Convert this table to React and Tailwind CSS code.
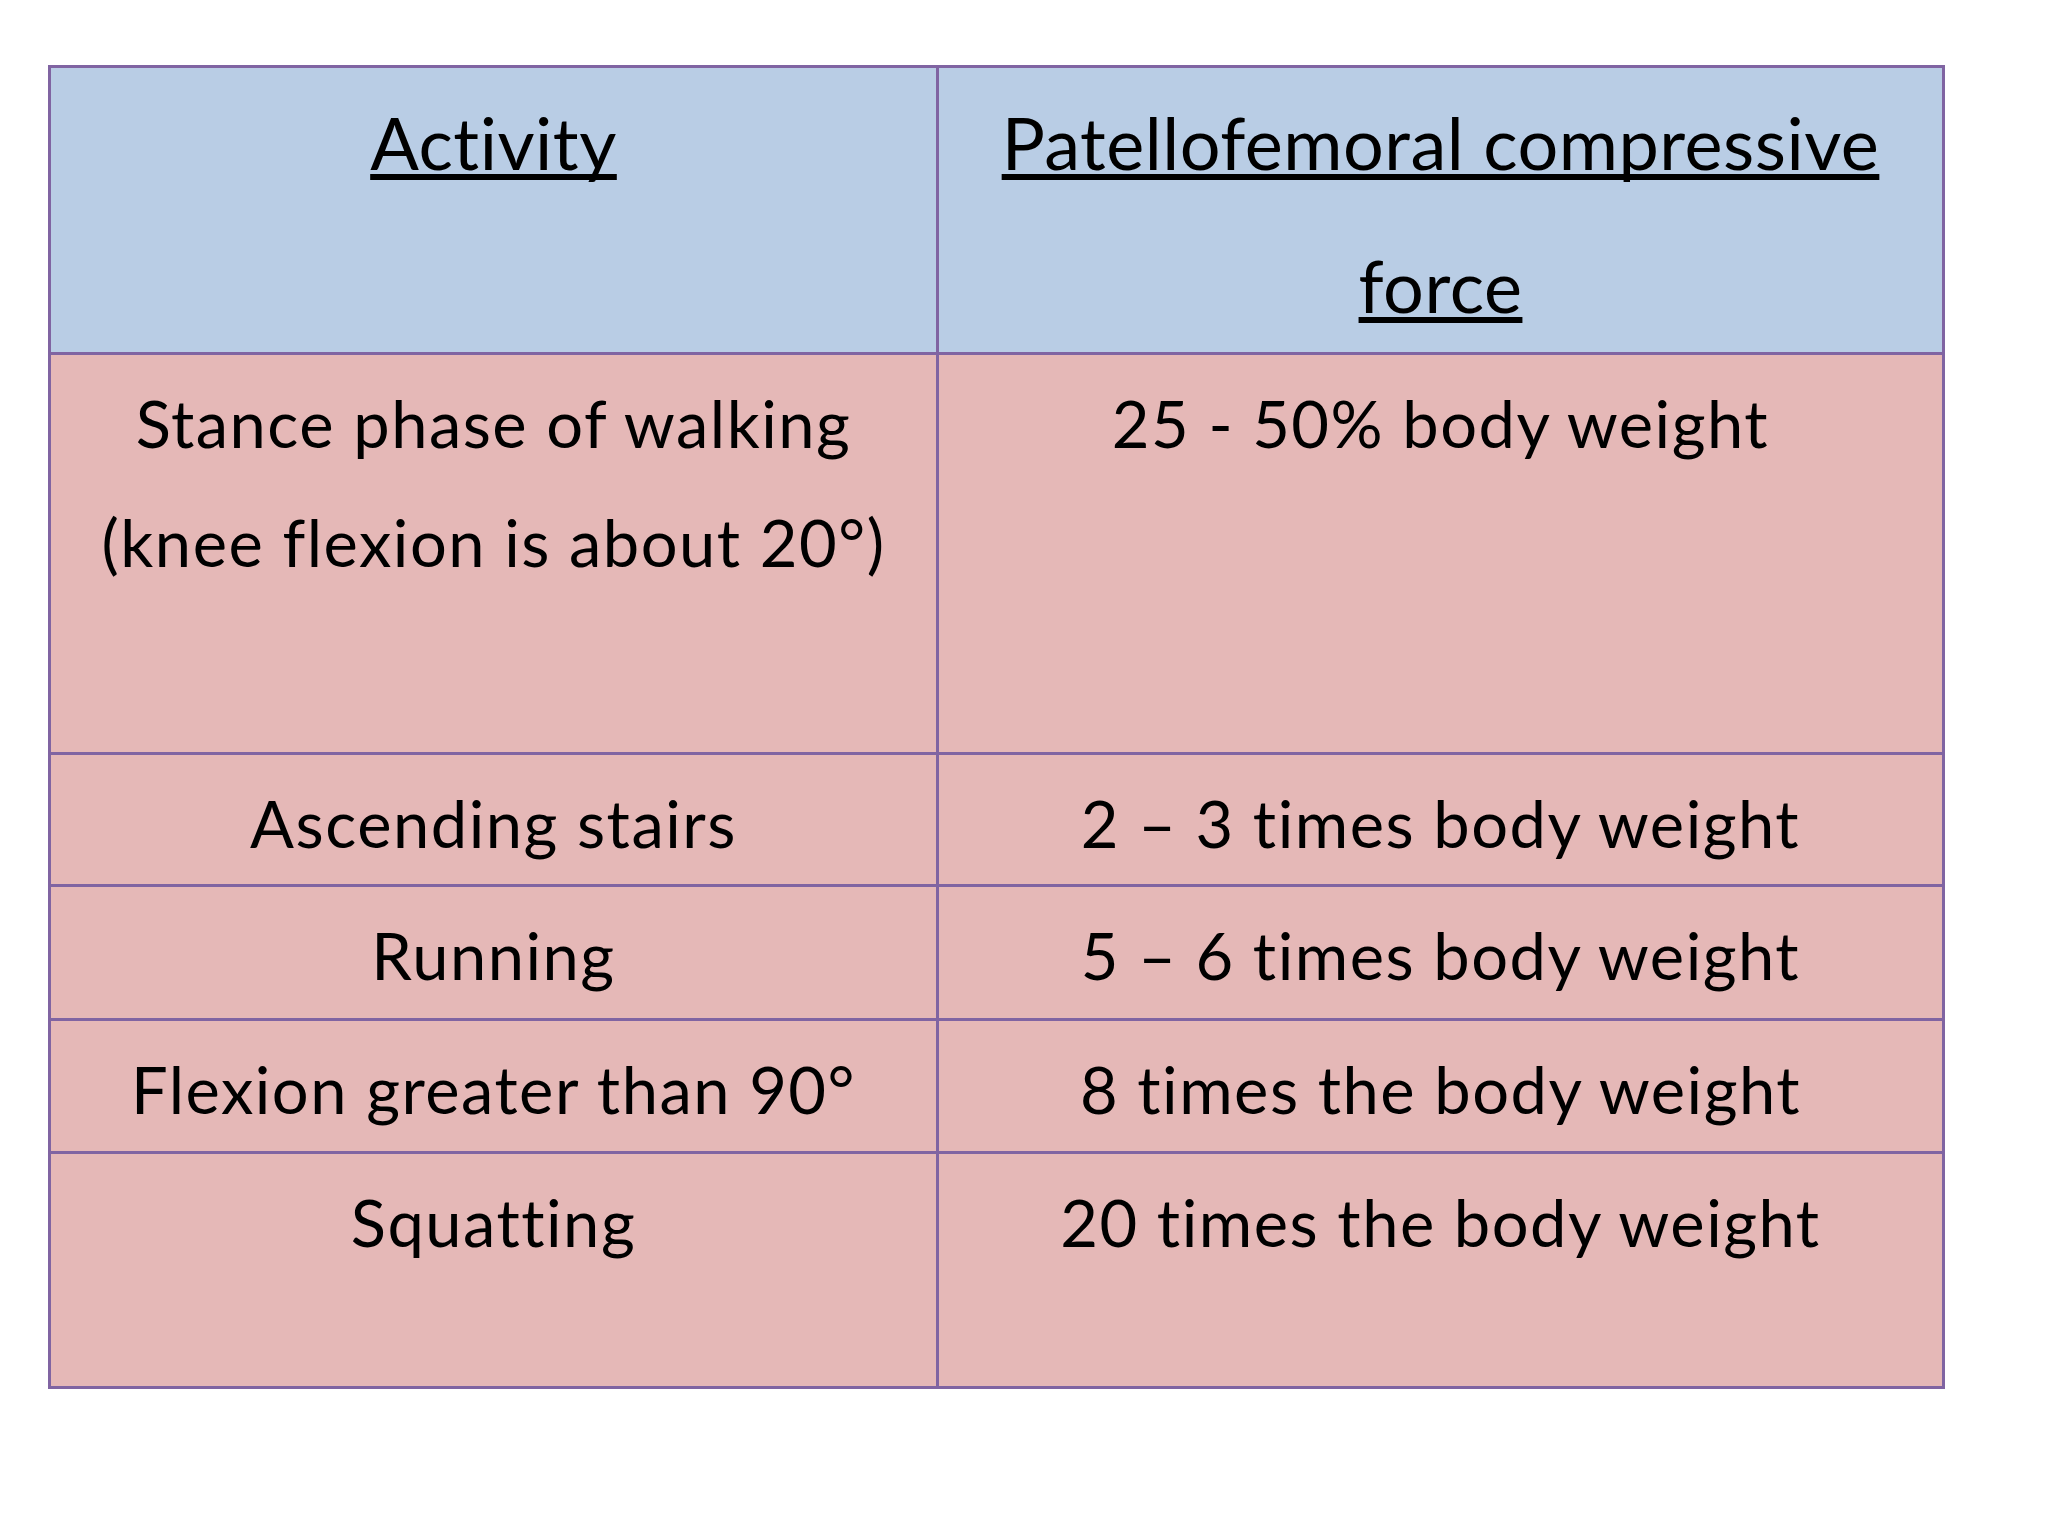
export default function App() {
  const rows = [
    ["Stance phase of walking", "(knee flexion is about 20°)", "25 - 50% body weight"],
    ["Ascending stairs", null, "2 – 3 times body weight"],
    ["Running", null, "5 – 6 times body weight"],
    ["Flexion greater than 90°", null, "8 times the body weight"],
    ["Squatting", null, "20 times the body weight"],
  ];

  return (
    <div className="min-h-screen bg-white pl-[48px] pt-[65px] font-['Lato','Open_Sans',sans-serif] text-black [font-variant-ligatures:none]">
      <div className="grid w-[1897px] grid-cols-[885px_1003px] grid-rows-[284px_397px_129px_131px_130px_232px] gap-[3px] bg-[#8064a2] p-[3px]">
        {/* header */}
        <div className="bg-[#b9cde5] pt-[3px] text-center text-[72px] leading-[143px] tracking-[0.5px]">
          <span className="underline decoration-[6px] underline-offset-[4px] [text-decoration-skip-ink:none]">
            Activity
          </span>
        </div>
        <div className="bg-[#b9cde5] pt-[3px] text-center text-[72px] leading-[143px] tracking-[0.5px]">
          <span className="underline decoration-[6px] underline-offset-[4px] [text-decoration-skip-ink:none]">
            Patellofemoral compressive
          </span>
          <br />
          <span className="underline decoration-[6px] underline-offset-[4px] [text-decoration-skip-ink:none]">
            force
          </span>
        </div>

        {rows.map(([a, a2, b]) => (
          <>
            <div key={a} className="bg-[#e5b8b7] pt-[9px] text-center text-[65px] leading-[119px] tracking-[1.5px]">
              {a}
              {a2 && (
                <>
                  <br />
                  {a2}
                </>
              )}
            </div>
            <div key={b} className="bg-[#e5b8b7] pt-[9px] text-center text-[65px] leading-[119px] tracking-[1.5px]">
              {b}
            </div>
          </>
        ))}
      </div>
    </div>
  );
}
